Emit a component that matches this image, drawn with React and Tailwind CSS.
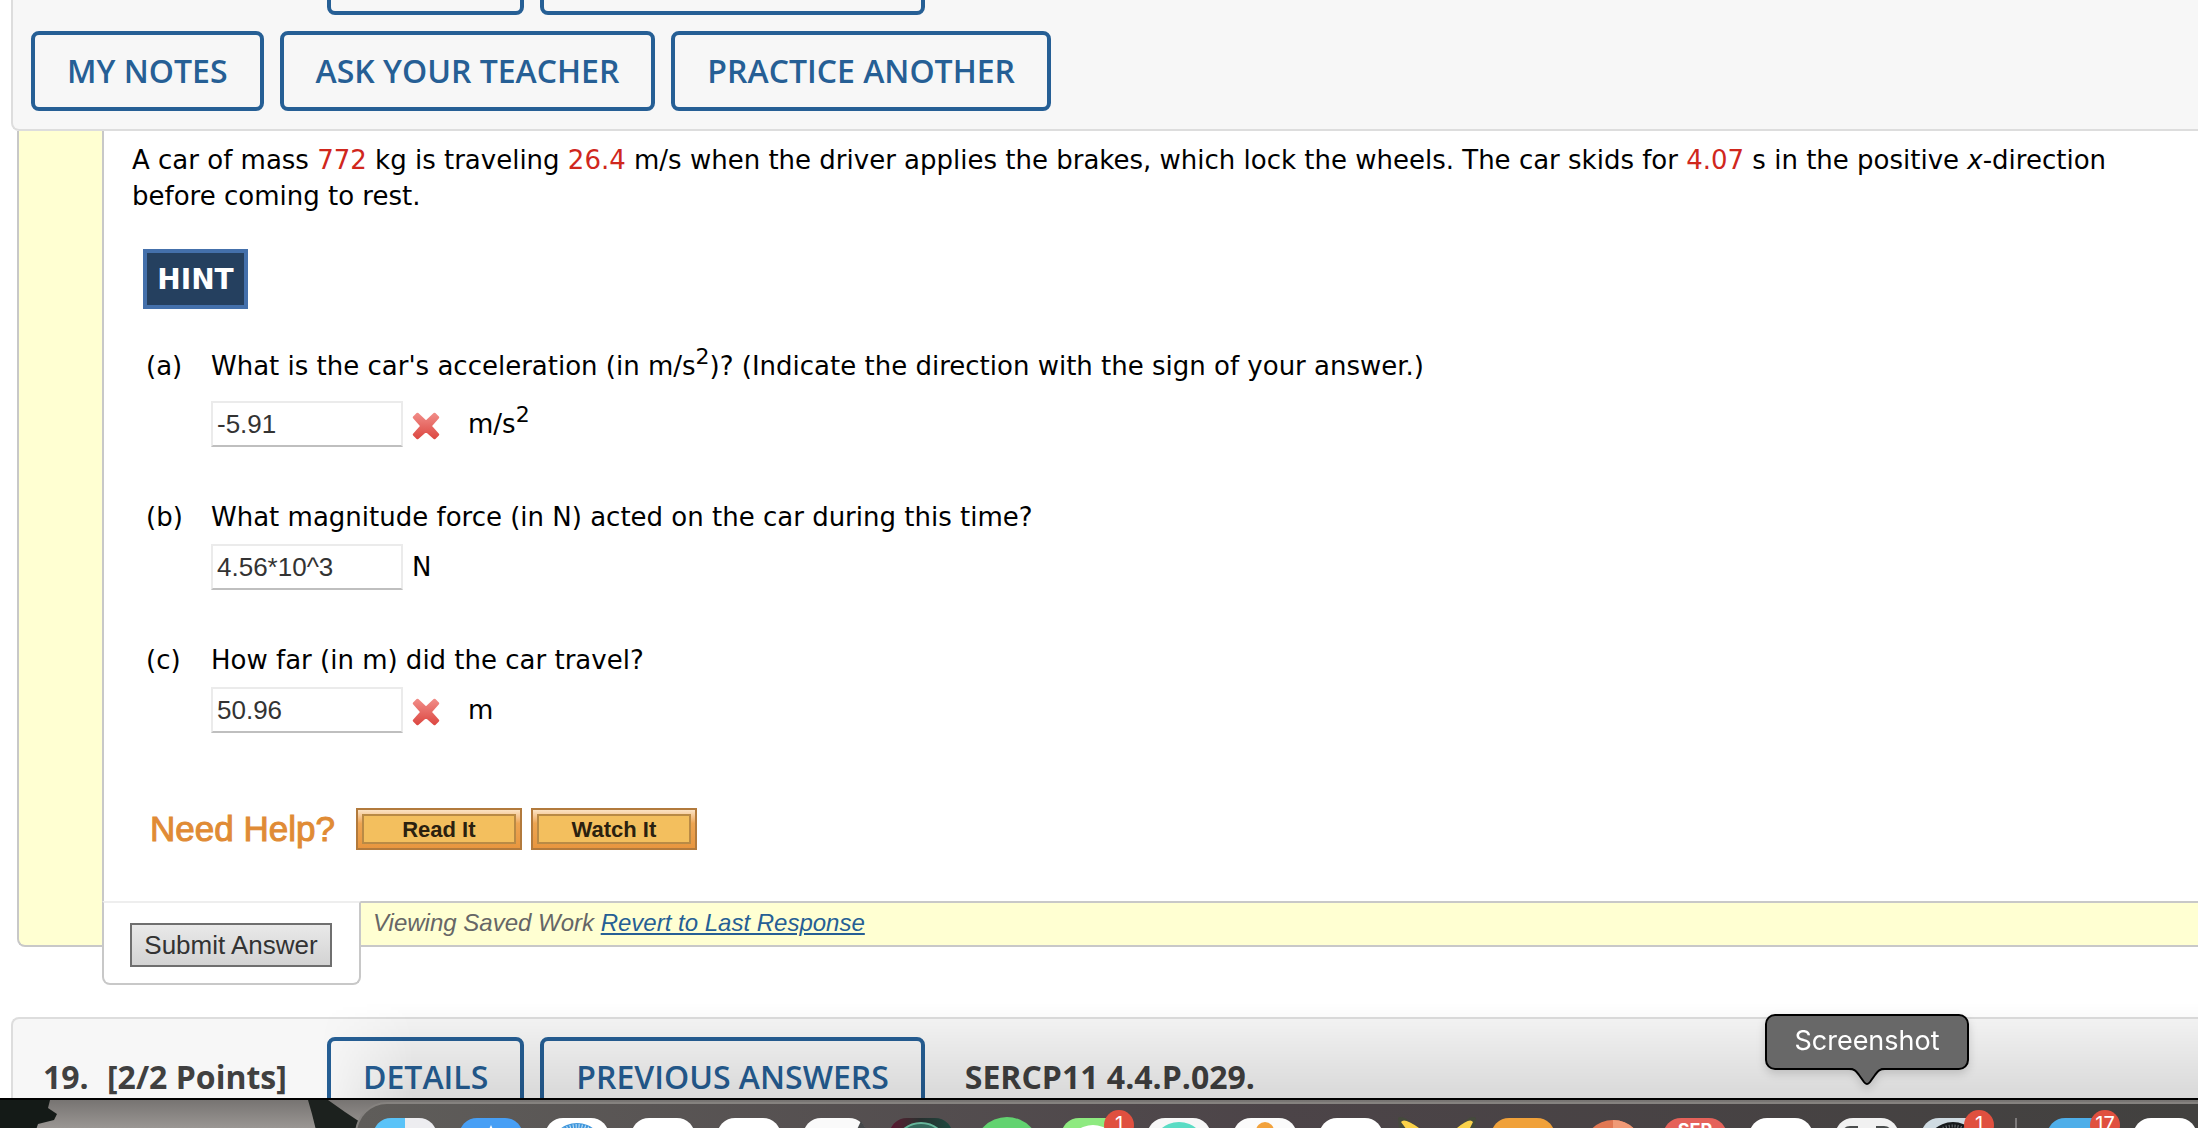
import React from 'react'

const outline = 'h-20 px-8 shrink-0 border-4 border-[#265f95] rounded-lg text-[32px] font-semibold text-[#265f95] whitespace-nowrap'

const parts = [
  { id: 'a', value: '-5.91', wrong: true, raised: true, unit: <>m/s<Sup>2</Sup></>, text: <>What is the car's acceleration (in m/s<Sup>2</Sup>)? (Indicate the direction with the sign of your answer.)</> },
  { id: 'b', value: '4.56*10^3', wrong: false, unit: 'N', text: 'What magnitude force (in N) acted on the car during this time?' },
  { id: 'c', value: '50.96', wrong: true, unit: 'm', text: 'How far (in m) did the car travel?' },
]

function Sup({ children }) {
  return <sup className="text-[22px] leading-none">{children}</sup>
}

const Num = ({ children }) => <span className="text-[#d0271d]">{children}</span>

const Cross = () => (
  <svg viewBox="0 0 28 28" className="w-7 h-7 mt-1 shrink-0" role="img" aria-label="Incorrect">
    <defs>
      <linearGradient id="cross" x1="0" y1="0" x2="0" y2="1">
        <stop offset="0" stopColor="#f08a85" />
        <stop offset="1" stopColor="#dd4a44" />
      </linearGradient>
    </defs>
    <path d="M5.500 2 L14 10 L22.500 2 L26 5.500 L18.500 14 L26 22.500 L22.500 26 L14 18.500 L5.500 26 L2 22.500 L9.500 14 L2 5.500 Z" fill="url(#cross)" stroke="url(#cross)" strokeWidth="2.500" strokeLinejoin="round" />
  </svg>
)

const Part = ({ part }) => (
  <li className="flex">
    <span className="w-[65px] shrink-0 leading-9">({part.id})</span>
    <div>
      <label htmlFor={`answer-${part.id}`} className="block leading-9">{part.text}</label>
      {/* a raised exponent in the unit needs a taller row */}
      <div className={`flex items-center mt-[9px] ${part.raised ? 'pt-2' : ''}`}>
        <input
          id={`answer-${part.id}`}
          defaultValue={part.value}
          className="w-48 h-[46px] px-1 border-2 border-[#ebebeb] border-b-[#bfbfbf] text-[26px] text-[#333] font-['Liberation_Sans',sans-serif]"
        />
        <div className="flex items-center gap-7 ml-[9px]">
          {part.wrong && <Cross />}
          <span className="leading-9">{part.unit}</span>
        </div>
      </div>
    </div>
  </li>
)

const HelpButton = ({ children }) => (
  <button className="w-[166px] h-[42px] p-1 border-2 border-[#b27a3c] bg-linear-to-b from-[#fbe3c4] via-[#eda552] via-35% to-[#e8963f]">
    <span className="flex h-full items-center justify-center border-2 border-[#b98a45] bg-[#f3bf5e] text-[22px] font-bold text-[#2b210f]">{children}</span>
  </button>
)

const Badge = ({ children }) => (
  <span className="absolute -top-2 -right-[9px] w-[30px] h-[30px] rounded-full bg-[#e0503f] text-white text-xl leading-7 text-center">{children}</span>
)

const Tooltip = ({ children }) => (
  <div className="absolute bottom-[112px] left-1/2 -translate-x-1/2 drop-shadow-lg">
    <div className="w-[204px] h-14 border-2 border-black rounded-[10px] bg-[#686868] text-white text-[27px] leading-[50px] text-center">{children}</div>
    <svg viewBox="0 0 36 18" className="absolute top-[54px] left-[84px] w-9 h-[18px]">
      <path d="M0 0 C6 0 7 3 10 7 L15 14 Q18 18 21 14 L26 7 C29 3 30 0 36 0 Z" fill="#686868" />
      <path d="M0 1 C6 1 7 3 10 7 L15 14 Q18 18 21 14 L26 7 C29 3 30 1 36 1" fill="none" stroke="#000" strokeWidth="2" />
    </svg>
  </div>
)

// app art, only the top edge shows above the bottom of the screen
const apps = [
  { name: 'Finder', bg: 'bg-linear-to-r from-[#5ac3f8] from-50% to-[#ededf0] to-50%' },
  { name: 'App Store', bg: 'bg-[#479ff5]', art: <path d="M32 7 L36 16 L28 16 Z" fill="#fff" /> },
  { name: 'Safari', bg: 'bg-white', art: <><circle cx="32" cy="32" r="27" fill="#3f97dc" /><circle cx="32" cy="32" r="24" fill="none" stroke="#cfe6f8" strokeWidth="4" strokeDasharray="1 2" /></> },
  { name: 'Chrome', bg: 'bg-white' },
  { name: 'Slack', bg: 'bg-white' },
  { name: 'Notes', bg: 'bg-[#fafafa]', art: <path d="M58 3 L64 12 L50 20 Z" fill="#46484a" /> },
  { name: 'Siri', bg: 'bg-linear-to-r from-[#5c1030] via-[#26302f] to-[#1b4a40]', art: <><circle cx="32" cy="32" r="27" fill="#34685b" stroke="#67b59a" strokeWidth="2" /><circle cx="32" cy="32" r="22" fill="#3c8f70" /></> },
  { name: 'WhatsApp', bg: 'bg-transparent', art: <circle cx="32" cy="32" r="33" fill="#62d370" /> },
  { name: 'Messages', bg: 'bg-[#8eea80]', badge: '1', art: <ellipse cx="32" cy="29" rx="24" ry="22" fill="#fff" /> },
  { name: 'Maps', bg: 'bg-[#f7f7f7]', art: <circle cx="32" cy="31" r="27" fill="#5adcc4" /> },
  { name: 'Photos', bg: 'bg-[#fbfbfb]', art: <circle cx="32" cy="13" r="9" fill="#f2a23c" /> },
  { name: 'Word', bg: 'bg-white' },
  { name: 'Butterfly', bg: 'bg-transparent', art: <><path d="M-7 0 Q-6 -2 0 0 L14 10 L-6 10 Z M71 0 Q70 -2 64 0 L52 10 L70 10 Z" fill="#454a3c" /><path d="M-4 4 Q-1 -1 14 10 L2 12 Z M68 4 Q65 -1 52 10 L64 12 Z" fill="#fbd24a" /></> },
  { name: 'Books', bg: 'bg-[#f0a13a]' },
  { name: 'Charts', bg: 'bg-transparent', art: <><circle cx="36" cy="32" r="30" fill="#e17853" /><path d="M36 2 A30 30 0 0 1 66 32 L36 32 Z" fill="#f09a76" /></> },
  { name: 'Calendar', bg: 'bg-[#e5625a]', label: 'SEP' },
  { name: 'Reminders', bg: 'bg-white' },
  { name: 'Screenshot', bg: 'bg-[#f1f1f1]', tip: true, art: <path d="M10 24 V15 Q10 10 15 10 H23 M41 10 H49 Q54 10 54 15 V24" fill="none" stroke="#4a4d4d" strokeWidth="4" /> },
  { name: 'Preview', bg: 'bg-[#cfdbe2]', badge: '1', art: <><circle cx="32" cy="32" r="28" fill="#16191b" /><circle cx="32" cy="32" r="24" fill="none" stroke="#75797b" strokeWidth="3" strokeDasharray="1 2" /></> },
]

const downloads = [
  { name: 'Mail', bg: 'bg-[#4eaee9]', badge: '17' },
  { name: 'Document', bg: 'bg-white' },
]

const DockIcon = ({ app }) => (
  <div className={`relative w-16 h-16 shrink-0 rounded-[18px] ${app.bg}`}>
    {app.art && <svg viewBox="0 0 64 64" className="w-16 h-16 overflow-visible">{app.art}</svg>}
    {app.label && <div className="pt-1 text-center text-lg leading-4 font-bold text-white">{app.label}</div>}
    {app.badge && <Badge>{app.badge}</Badge>}
    {app.tip && <Tooltip>{app.name}</Tooltip>}
  </div>
)

const Dock = () => (
  <footer className="relative h-[30px] shrink-0 border-t-2 border-black bg-linear-to-b from-[#777472] to-[#9a9693] pl-[355px] font-[Inter,sans-serif]">
    <svg viewBox="0 0 400 30" className="absolute top-0 left-0 w-[400px] h-[30px]">
      <path d="M0 0 H50 L48 8 L57 14 L54 20 L38 24 L36 30 H0 Z" fill="#141a17" />
      <path d="M308 0 H328 L345 12 L372 30 H316 L312 14 Z" fill="#1c211e" />
    </svg>
    <div className="relative h-[90px] mt-[2px] pt-[14px] pl-4 flex gap-[22px] rounded-tl-[32px] border-t-2 border-l-2 border-[#85827f] bg-linear-to-r from-[#5f5d5a] via-[#4c4448] to-[#42413f]">
      {apps.map((app) => <DockIcon key={app.name} app={app} />)}
      <div className="w-[2px] h-16 mx-2 shrink-0 bg-[#7d7a7a]" />
      {downloads.map((app) => <DockIcon key={app.name} app={app} />)}
    </div>
  </footer>
)

const App = () => {
  return (
    <div className="h-screen flex flex-col overflow-hidden bg-white">
      <main className="relative flex-1 min-h-0 overflow-hidden pl-[11px] font-['Open_Sans',sans-serif]">
        <header className="pl-[18px] pb-[18px] bg-[#f7f7f7] border-l-2 border-b-2 border-[#ddd] rounded-bl-lg">
          <div className="flex items-end gap-4 h-[15px] pl-[296px] overflow-hidden">
            <button className={outline}>DETAILS</button>
            <button className={outline}>PREVIOUS ANSWERS</button>
          </div>
          <div className="flex gap-4 mt-4">
            <button className={outline}>MY NOTES</button>
            <button className={outline}>ASK YOUR TEACHER</button>
            <button className={outline}>PRACTICE ANOTHER</button>
          </div>
        </header>

        <section className="ml-[6px] pl-[83px] bg-[#ffffd2] border-l-2 border-b-2 border-[#c8c8c8] rounded-bl-lg">
          <div className="pt-[11px] pb-[51px] pl-7 pr-10 bg-white border-l-2 border-[#c8c8c8] text-[26px] text-black font-['DejaVu_Sans',sans-serif]">
            <p className="leading-9">
              A car of mass <Num>772</Num> kg is traveling <Num>26.4</Num> m/s when the driver applies the brakes, which lock the wheels. The car skids for <Num>4.07</Num> s in the positive <i>x</i>-direction before coming to rest.
            </p>
            <button className="block w-[105px] h-[60px] pt-[2px] mt-[35px] ml-[11px] border-4 border-[#4470ab] bg-[#25405f] text-[28px] font-bold text-white">HINT</button>
            <ol className="flex flex-col gap-[52px] mt-[39px] ml-[14px]">
              {parts.map((p) => <Part key={p.id} part={p} />)}
            </ol>
            <div className="flex items-center mt-[75px] ml-[18px] gap-[9px] font-['Liberation_Sans',sans-serif]">
              <h2 className="mr-3 text-[35px] leading-[42px] text-[#e08b35] [-webkit-text-stroke:1px_#e08b35]">Need Help?</h2>
              <HelpButton>Read It</HelpButton>
              <HelpButton>Watch It</HelpButton>
            </div>
          </div>
          <div className="flex items-start h-11 font-['Liberation_Sans',sans-serif]">
            <div className="w-[259px] h-[84px] shrink-0 pt-5 pl-[26px] bg-white border-2 border-t-[#eee] border-[#c8c8c8] rounded-b-lg">
              <button className="w-[202px] h-11 border-2 border-[#6f6f6f] bg-linear-to-b from-[#e9e9e9] to-[#d3d3d3] text-[26px] text-[#333]">Submit Answer</button>
            </div>
            <p className="flex-1 pl-3 pt-1 border-t-2 border-[#c8c8c8] text-2xl italic text-[#666]">
              Viewing Saved Work <a href="#revert" className="text-[#265f95] underline">Revert to Last Response</a>
            </p>
          </div>
        </section>

        <header className="mt-[70px] h-[120px] pt-[18px] pl-[30px] flex items-start bg-[#f7f7f7] border-l-2 border-t-2 border-[#ddd] rounded-tl-lg text-[32px] font-bold text-[#404040]">
          <span className="w-16 leading-[80px]">19.</span>
          <span className="w-[220px] leading-[80px]">[2/2 Points]</span>
          <div className="flex gap-4">
            <button className={outline}>DETAILS</button>
            <button className={outline}>PREVIOUS ANSWERS</button>
          </div>
          <span className="ml-10 leading-[80px]">SERCP11 4.4.P.029.</span>
        </header>

        <div className="absolute bottom-0 left-[320px] right-0 h-24 bg-linear-to-b from-transparent to-black/12 mask-l-from-95% pointer-events-none" />
      </main>
      <Dock />
    </div>
  )
}

export default App
